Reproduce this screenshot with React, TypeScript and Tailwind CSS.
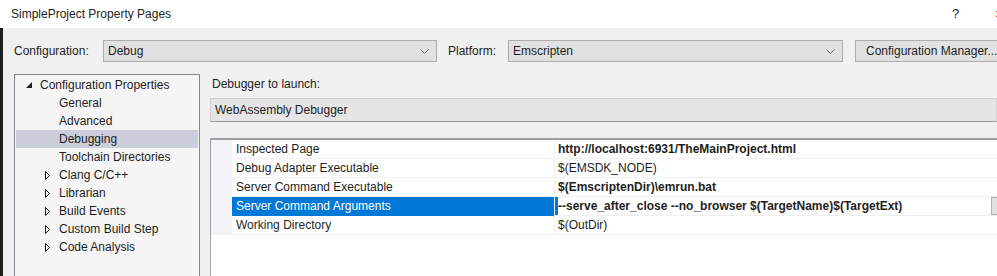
import React from "react";

const Chevron = () => (
  <svg width="9" height="5" viewBox="0 0 9 5" className="shrink-0">
    <path d="M0.5 0.5 L4.5 4.5 L8.5 0.5" fill="none" stroke="#707070" strokeWidth="1" />
  </svg>
);

const Expander = ({ open }: { open?: boolean }) =>
  open ? (
    <svg width="6" height="6" viewBox="0 0 6 6">
      <path d="M6 0 L6 6 L0 6 Z" fill="#1e1e1e" />
    </svg>
  ) : (
    <svg width="5" height="9" viewBox="0 0 5 9">
      <path d="M0.5 0.5 L4.5 4.5 L0.5 8.5 Z" fill="none" stroke="#1e1e1e" strokeWidth="1" />
    </svg>
  );

const treeItems = [
  { label: "General", arrow: false },
  { label: "Advanced", arrow: false },
  { label: "Debugging", arrow: false, selected: true },
  { label: "Toolchain Directories", arrow: false },
  { label: "Clang C/C++", arrow: true },
  { label: "Librarian", arrow: true },
  { label: "Build Events", arrow: true },
  { label: "Custom Build Step", arrow: true },
  { label: "Code Analysis", arrow: true },
];

const props = [
  { name: "Inspected Page", value: "http://localhost:6931/TheMainProject.html", bold: true },
  { name: "Debug Adapter Executable", value: "$(EMSDK_NODE)" },
  { name: "Server Command Executable", value: "$(EmscriptenDir)\\emrun.bat", bold: true },
  {
    name: "Server Command Arguments",
    value: "--serve_after_close --no_browser $(TargetName)$(TargetExt)",
    bold: true,
    selected: true,
  },
  { name: "Working Directory", value: "$(OutDir)" },
];

export default function App() {
  return (
    <div className="flex h-[276px] w-[997px] flex-col overflow-hidden bg-white font-['Liberation_Sans',Arial,sans-serif] text-[12px] text-[#1e1e1e]">
      {/* title bar */}
      <div className="flex h-[28px] shrink-0 items-center bg-white pl-[11px]">
        <span className="flex-1">SimpleProject Property Pages</span>
        <span className="w-[43px] shrink-0 text-[13px]">?</span>
        <span className="w-[2px] shrink-0 overflow-hidden text-[14px] leading-none">×</span>
      </div>

      <div className="flex flex-1 flex-col border-l-[3px] border-[#1e1e1e] bg-[#f0f0f0] pl-[11px]">
        {/* configuration row */}
        <div className="mt-[12px] flex h-[22px] items-center">
          <span className="w-[89px] shrink-0">Configuration:</span>
          <div className="flex h-[22px] w-[334px] shrink-0 items-center justify-between border border-[#adadad] bg-[#e1e1e1] pl-[4px] pr-[7px]">
            <span>Debug</span>
            <Chevron />
          </div>
          <span className="ml-[11px] w-[60px] shrink-0">Platform:</span>
          <div className="flex h-[22px] w-[335px] shrink-0 items-center justify-between border border-[#adadad] bg-[#e1e1e1] pl-[4px] pr-[7px]">
            <span>Emscripten</span>
            <Chevron />
          </div>
          <div className="ml-[12px] flex h-[22px] w-[150px] shrink-0 items-center border border-[#adadad] bg-[#e1e1e1] pl-[10px]">
            Configuration Manager...
          </div>
        </div>

        {/* lower area */}
        <div className="mt-[12px] flex flex-1 gap-[10px]">
          <div className="w-[186px] shrink-0 border border-b-0 border-[#828790] bg-[#f5f5f5] px-px pt-[1px]">
            <div className="flex h-[18px] items-center">
              <span className="ml-[10px] flex w-[14px] items-center">
                <Expander open />
              </span>
              <span>Configuration Properties</span>
            </div>
            {treeItems.map((item) => (
              <div
                key={item.label}
                className={`flex h-[18px] items-center ${item.selected ? "bg-[#cccedb]" : ""}`}
              >
                <span className="ml-[29px] flex w-[14px] items-center">
                  {item.arrow && <Expander />}
                </span>
                <span>{item.label}</span>
              </div>
            ))}
          </div>

          <div className="flex flex-1 flex-col">
            <div className="mt-[1px] flex h-[18px] items-center pl-[2px]">Debugger to launch:</div>
            <div className="mt-[5px] flex h-[24px] items-center border border-[#d0d0d0] border-b-[#9a9a9a] bg-[#e5e5e5] pl-[4px]">
              WebAssembly Debugger
            </div>
            <div className="mt-[16px] flex-1 border-l border-t-2 border-[#a0a0a0] bg-white">
              {props.map((p) => (
                <div key={p.name} className="flex h-[19px]">
                  <div className="w-[21px] shrink-0 bg-[#f3f3f7]" />
                  <div
                    className={`flex w-[322px] shrink-0 items-center border-b pl-[4px] ${
                      p.selected ? "border-[#0078d7] bg-[#0078d7] text-white" : "border-[#f0f0f0]"
                    }`}
                  >
                    {p.name}
                  </div>
                  <div className="w-px shrink-0 bg-[#f0f0f0]" />
                  <div className="flex flex-1 items-center border-b border-[#f0f0f0]">
                    <div className={`h-full w-[3px] shrink-0 ${p.selected ? "bg-[#0078d7]" : ""}`} />
                    <span className={`flex-1 whitespace-nowrap ${p.bold ? "font-bold" : ""}`}>
                      {p.value}
                    </span>
                    {p.selected && (
                      <div className="h-[18px] w-[6px] shrink-0 border border-r-0 border-[#adadad] bg-[#e1e1e1]" />
                    )}
                  </div>
                </div>
              ))}
            </div>
          </div>
        </div>
      </div>
    </div>
  );
}
